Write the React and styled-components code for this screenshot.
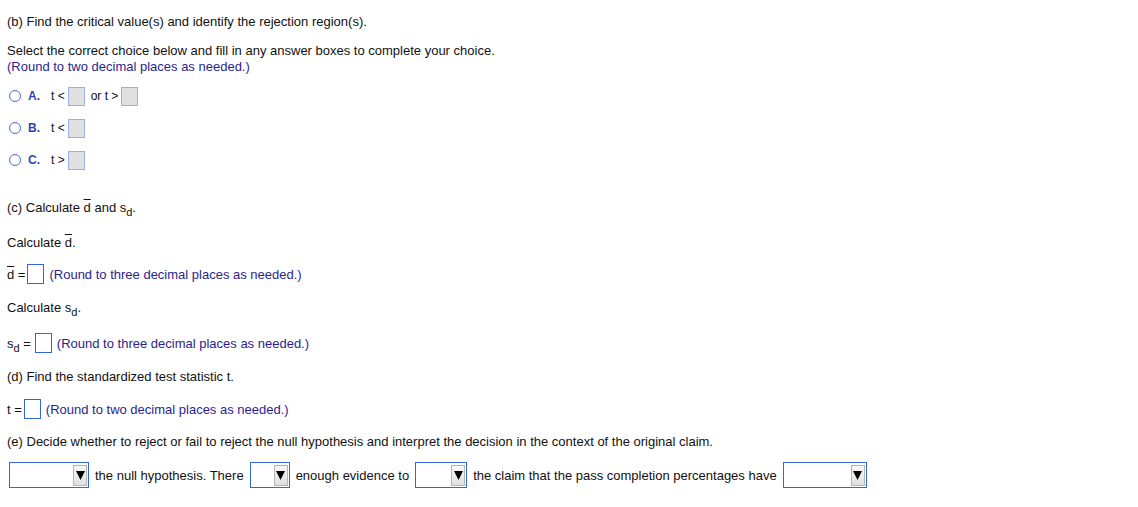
import React from 'react';
import styled, { createGlobalStyle } from 'styled-components';

const Global = createGlobalStyle`
  body {
    margin: 0;
    background: #fff;
    font-family: "Liberation Sans", Arial, sans-serif;
    font-size: 13px;
    color: #111;
  }
`;

const Page = styled.div`
  padding: 14px 7px 20px 7px;
`;

const Line = styled.div`
  line-height: 16px;
  margin-top: ${(p) => p.$mt || 0}px;
  white-space: nowrap;
`;

const Hint = styled.span`
  color: #2b1e8e;
`;

const Row = styled.div`
  display: flex;
  align-items: center;
  height: ${(p) => p.$h || 20}px;
  margin-top: ${(p) => p.$mt || 0}px;
  white-space: nowrap;
`;

const Radio = styled.span`
  width: 12px;
  height: 12px;
  border: 1px solid #5566dd;
  border-radius: 50%;
  margin-left: 2px;
  margin-right: 7px;
  box-sizing: border-box;
  flex: none;
`;

const Letter = styled.span`
  color: #3344bb;
  font-weight: bold;
  width: 23px;
  font-size: 12px;
`;

const Op = styled.span`
  font-size: 12px;
  margin: 0 3px 0 ${(p) => p.$ml || 0}px;
`;

const GrayBox = styled.span`
  width: 15px;
  height: 17px;
  background: #e0e0e0;
  border: 1px solid #9ab0ee;
  flex: none;
`;

const AnswerBox = styled.span`
  width: 15px;
  height: 18px;
  border: 1px solid #3366dd;
  background: #fff;
  flex: none;
  margin: 0 ${(p) => p.$mr || 5}px 0 ${(p) => p.$ml || 2}px;
`;

const Bar = styled.span`
  text-decoration: overline;
`;

const Sub = styled.sub`
  font-size: 11px;
  vertical-align: -4px;
  line-height: 0;
`;

const Select = styled.span`
  display: inline-flex;
  justify-content: flex-end;
  align-items: center;
  width: ${(p) => p.$w}px;
  height: 24px;
  border: 1px solid #3366dd;
  background: #fff;
  box-sizing: content-box;
  flex: none;
  margin: 0 ${(p) => p.$mr || 6}px 0 ${(p) => p.$ml || 6}px;
`;

const Arrow = styled.span`
  width: 14px;
  height: 21px;
  margin-right: 1px;
  background: linear-gradient(#f8f8f8, #e0e0e0);
  border: 1px solid #b5b5b5;
  box-sizing: border-box;
  display: flex;
  align-items: center;
  justify-content: center;
`;

const Dropdown = ({ w, ml, mr }) => (
  <Select $w={w} $ml={ml} $mr={mr}>
    <Arrow>
      <svg width="9" height="10" viewBox="0 0 9 10">
        <path d="M0 1 H9 L4.5 10 Z" fill="#000" />
      </svg>
    </Arrow>
  </Select>
);

const Choice = ({ letter, children }) => (
  <Row $h={22} $mt={10}>
    <Radio />
    <Letter>{letter}</Letter>
    {children}
  </Row>
);

export default function App() {
  return (
    <Page>
      <Global />
      <Line>(b) Find the critical value(s) and identify the rejection region(s).</Line>
      <Line $mt={13}>Select the correct choice below and fill in any answer boxes to complete your choice.</Line>
      <Line>
        <Hint>(Round to two decimal places as needed.)</Hint>
      </Line>
      <Choice letter="A.">
        <Op>t &lt;</Op>
        <GrayBox />
        <Op $ml={6}>or t &gt;</Op>
        <GrayBox />
      </Choice>
      <Choice letter="B.">
        <Op>t &lt;</Op>
        <GrayBox />
      </Choice>
      <Choice letter="C.">
        <Op>t &gt;</Op>
        <GrayBox />
      </Choice>

      <Line $mt={29}>
        (c) Calculate <Bar>d</Bar> and s<Sub>d</Sub>.
      </Line>
      <Line $mt={19}>
        Calculate <Bar>d</Bar>.
      </Line>
      <Row $mt={13}>
        <span>
          <Bar>d</Bar>&nbsp;=
        </span>
        <AnswerBox />
        <Hint>(Round to three decimal places as needed.)</Hint>
      </Row>
      <Line $mt={16}>
        Calculate s<Sub>d</Sub>.
      </Line>
      <Row $mt={17}>
        <span>
          s<Sub>d</Sub>&nbsp;=
        </span>
        <AnswerBox $ml={4} />
        <Hint>(Round to three decimal places as needed.)</Hint>
      </Row>
      <Line $mt={16}>(d) Find the standardized test statistic t.</Line>
      <Row $mt={14}>
        <span>t =</span>
        <AnswerBox $ml={2} />
        <Hint>(Round to two decimal places as needed.)</Hint>
      </Row>
      <Line $mt={15}>(e) Decide whether to reject or fail to reject the null hypothesis and interpret the decision in the context of the original claim.</Line>
      <Row $h={26} $mt={12}>
        <Dropdown w={78} ml={2} mr={6} />
        the null hypothesis. There
        <Dropdown w={38} />
        enough evidence to
        <Dropdown w={50} />
        the claim that the pass completion percentages have
        <Dropdown w={82} />
      </Row>
    </Page>
  );
}
